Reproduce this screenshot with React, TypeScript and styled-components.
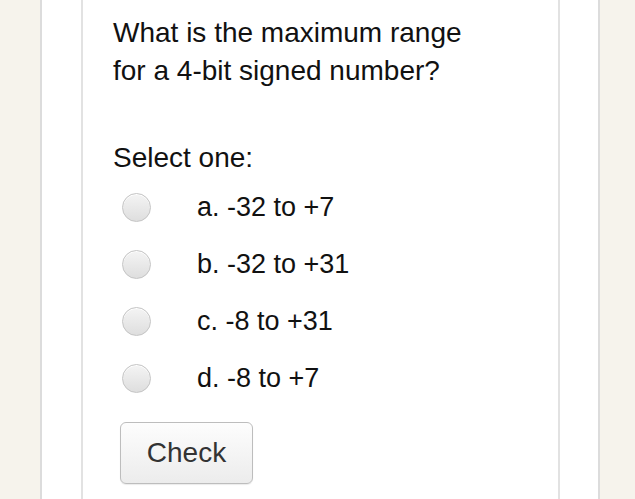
import React from "react";
import styled, { createGlobalStyle } from "styled-components";

const Global = createGlobalStyle`
  html, body { margin: 0; padding: 0; }
  body {
    background: #f6f3ec;
    font-family: "Liberation Sans", Arial, Helvetica, sans-serif;
    color: #111;
    overflow: hidden;
  }
`;

const Outer = styled.div`
  margin-left: 40px;
  width: 560px;
  min-height: 100vh;
  background: #fff;
  border-left: 2px solid #dcdcdc;
  border-right: 2px solid #dcdcdc;
  padding: 0 38px 0 39px;
  box-sizing: border-box;
`;

const Card = styled.div`
  min-height: 100vh;
  border-left: 2px solid #e2e2e2;
  border-right: 2px solid #e2e2e2;
  padding: 14px 0 0 30px;
  box-sizing: border-box;
`;

const Question = styled.p`
  margin: 0;
  font-size: 28px;
  line-height: 38px;
  color: #111;
`;

const Prompt = styled.p`
  margin: 49px 0 0;
  font-size: 28px;
  line-height: 38px;
  color: #111;
`;

const Options = styled.div`
  display: flex;
  flex-direction: column;
  margin-top: 2px;
`;

const Option = styled.label`
  display: flex;
  align-items: center;
  height: 57px;
  padding-left: 9px;
`;

const Radio = styled.span`
  width: 29px;
  height: 29px;
  border-radius: 50%;
  box-sizing: border-box;
  border: 1px solid #c4c4c4;
  background: linear-gradient(#f4f4f4, #dedede);
  box-shadow: inset 0 1px 0 #fff;
  flex: none;
`;

const OptionText = styled.span`
  margin-left: 46px;
  font-size: 27px;
  color: #111;
`;

const CheckButton = styled.button`
  margin: 15px 0 0 7px;
  width: 133px;
  height: 62px;
  border: 1px solid #bdbdbd;
  border-radius: 6px;
  background: linear-gradient(#fdfdfd, #ececec);
  box-shadow: 0 1px 1px rgba(0, 0, 0, 0.08);
  font-family: "Liberation Sans", Arial, Helvetica, sans-serif;
  font-size: 28px;
  color: #333;
  padding: 0;
`;

const options = ["a. -32 to +7", "b. -32 to +31", "c. -8 to +31", "d. -8 to +7"];

export default function App() {
  return (
    <>
      <Global />
      <Outer>
        <Card>
          <Question>
            What is the maximum range
            <br />
            for a 4-bit signed number?
          </Question>
          <Prompt>Select one:</Prompt>
          <Options>
            {options.map((o) => (
              <Option key={o}>
                <Radio />
                <OptionText>{o}</OptionText>
              </Option>
            ))}
          </Options>
          <CheckButton>Check</CheckButton>
        </Card>
      </Outer>
    </>
  );
}
